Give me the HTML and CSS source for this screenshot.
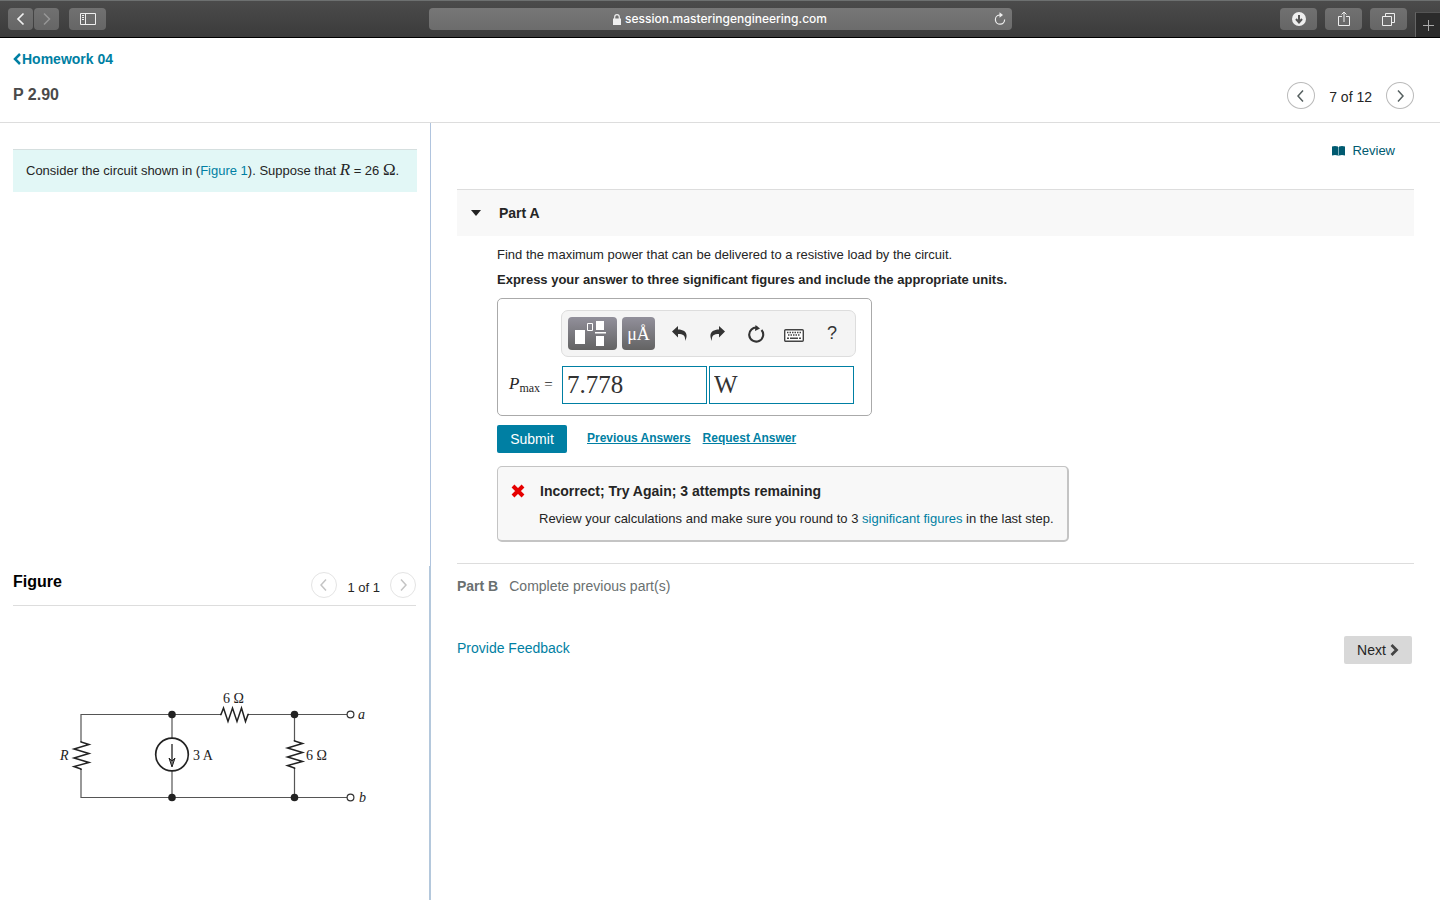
FILE: index.html
```
<!DOCTYPE html>
<html lang="en">
<head>
    <meta charset="UTF-8">
    <meta name="viewport" content="width=device-width, initial-scale=1.0">
    <title>P 2.90 - Homework 04</title>
    <link rel="stylesheet" href="styles.css">
</head>
<body>
    <div class="browser-bar">
        <div class="browser-group">
            <div class="nav-buttons">
                <button class="browser-btn small" aria-label="Back">
                    <svg width="26" height="22" viewBox="0 0 26 22"><path d="M15.500 5.500 10 11l5.500 5.500" fill="none" stroke="#f0f0f0" stroke-width="1.700"/></svg>
                </button>
                <button class="browser-btn small" aria-label="Forward">
                    <svg width="26" height="22" viewBox="0 0 26 22"><path d="M10 5.500 15.500 11 10 16.500" fill="none" stroke="#969696" stroke-width="1.500"/></svg>
                </button>
            </div>
            <button class="browser-btn" aria-label="Sidebar">
                <svg width="16" height="12" viewBox="0 0 16 12" fill="none" stroke="#eee"><path d="M.5.5h15v11H.5zM5.500.5v11M2 2.500h2M2 4.500h2M2 6.500h2"/></svg>
            </button>
        </div>
        <div class="address-bar">
            <svg class="lock" width="8" height="11" viewBox="0 0 8 11"><path d="M0 4.500h8V11H0z" fill="#eee"/><path d="M1.700 5V3a2.300 2.300 0 0 1 4.600 0v2" fill="none" stroke="#eee" stroke-width="1.200"/></svg>
            <span>session.masteringengineering.com</span>
            <button class="reload" aria-label="Reload">
                <svg width="12" height="14" viewBox="0 0 12 14"><path d="M7 3H5.500A4.600 4.600 0 1 0 10.600 7.500" fill="none" stroke="#eee" stroke-width="1.200"/><path d="M5.500.3 9 3 5.500 5.700z" fill="#eee"/></svg>
            </button>
        </div>
        <div class="browser-group right">
            <button class="browser-btn" aria-label="Downloads">
                <svg width="14" height="14" viewBox="0 0 14 14"><circle cx="7" cy="7" r="7" fill="#eee"/><path d="M7 3v7M4 7l3 3.500L10 7" fill="none" stroke="#555" stroke-width="2"/></svg>
            </button>
            <button class="browser-btn" aria-label="Share">
                <svg width="12" height="16" viewBox="0 0 12 16" fill="none" stroke="#eee"><path d="M4 5.500H.5v9h11v-9H8M6 11V1M3.500 3.500 6 1l2.500 2.500"/></svg>
            </button>
            <button class="browser-btn" aria-label="Tabs">
                <svg width="13" height="13" viewBox="0 0 13 13" fill="none" stroke="#eee"><path d="M.5 3.500h9v9h-9zM3.500 3V.5h9v9H10"/></svg>
            </button>
            <button class="new-tab" aria-label="New tab">
                <svg width="11" height="11" viewBox="0 0 11 11"><path d="M5.500 0v11M0 5.500h11" stroke="#aaa"/></svg>
            </button>
        </div>
    </div>

    <header class="page-header">
        <div>
            <a class="back-link" href="#"><svg width="8" height="12" viewBox="0 0 8 12"><path d="M7 1 2 6l5 5" fill="none" stroke="#007fa3" stroke-width="2.500"/></svg><span>Homework 04</span></a>
            <h1>P 2.90</h1>
        </div>
        <div class="pager">
            <button class="circle-btn" aria-label="Previous item">
                <svg width="8" height="12" viewBox="0 0 8 12"><path d="M6 .5 1 6l5 5.500" fill="none" stroke="#555f5f" stroke-width="1.500"/></svg>
            </button>
            <span>7 of 12</span>
            <button class="circle-btn" aria-label="Next item">
                <svg width="8" height="12" viewBox="0 0 8 12"><path d="M2 .5 7 6l-5 5.500" fill="none" stroke="#555f5f" stroke-width="1.500"/></svg>
            </button>
        </div>
    </header>

    <main>
        <div class="left-pane">
            <section class="intro">
                <p class="problem">Consider the circuit shown in (<a href="#figure">Figure 1</a>). Suppose that <i class="math">R</i> = 26 <span class="math">Ω</span>.</p>
            </section>
            <section class="figure" id="figure">
                <div class="figure-header">
                    <h2>Figure</h2>
                    <div class="pager figure-pager">
                        <button class="circle-btn" aria-label="Previous figure" disabled>
                            <svg width="8" height="12" viewBox="0 0 8 12"><path d="M6 .5 1 6l5 5.500" fill="none" stroke="#c4c4c4" stroke-width="1.500"/></svg>
                        </button>
                        <span>1 of 1</span>
                        <button class="circle-btn" aria-label="Next figure" disabled>
                            <svg width="8" height="12" viewBox="0 0 8 12"><path d="M2 .5 7 6l-5 5.500" fill="none" stroke="#c4c4c4" stroke-width="1.500"/></svg>
                        </button>
                    </div>
                </div>
                <svg class="circuit" width="340" height="130" viewBox="0 0 340 130">
                    <!-- wires -->
                    <g fill="none" stroke="#555" stroke-width="1.200">
                        <path d="M180 34.500H41V61M41 89v28.500h266M208 34.500h99M132 35v24M132 90v27M254.500 35v26M254.500 88v29"/>
                    </g>
                    <!-- resistors -->
                    <g fill="none" stroke="#222" stroke-width="1.500">
                        <path d="M41 61v1l8 2.500-15 4.500 15 4.500-15 4.500 15 4.500-15 4 7 2.500v1"/>
                        <path d="M254.500 60v1l8 2.500-15 4.500 15 4.500-15 4.500 15 4.500-15 4 7 2.500v1"/>
                        <path d="M180 34.500h1l2.500-6.500 4.500 13.500 4.500-13.500 4.500 13.500 4.500-13.500 4 13.500 2.500-7h1"/>
                        <circle cx="132" cy="74.500" r="16.300" stroke-width="1.700"/>
                    </g>
                    <path d="M132 64v20" stroke="#222" stroke-width="1.300"/>
                    <path d="m129 78 3 9 3-9-3 3z" fill="#777" stroke="#222"/>
                    <g fill="#222">
                        <circle cx="132" cy="34.500" r="3.800"/>
                        <circle cx="132" cy="117.500" r="3.800"/>
                        <circle cx="254.500" cy="34.500" r="3.800"/>
                        <circle cx="254.500" cy="117.500" r="3.800"/>
                    </g>
                    <g fill="#fff" stroke="#333" stroke-width="1.200">
                        <circle cx="310.500" cy="34.500" r="3.400"/>
                        <circle cx="310.500" cy="117.500" r="3.400"/>
                    </g>
                    <g class="labels">
                        <text x="183" y="23">6 Ω</text>
                        <text x="266" y="80">6 Ω</text>
                        <text x="153" y="80">3 A</text>
                        <text x="20" y="80" font-style="italic">R</text>
                        <text x="318" y="39" font-style="italic">a</text>
                        <text x="319" y="122" font-style="italic">b</text>
                    </g>
                </svg>
            </section>
        </div>

        <div class="right-pane">
            <a class="review" href="#">
                <svg width="13" height="11" viewBox="0 0 13 11"><path d="M0 .5q3-1 6 0v9q-3-1-6 0zM7 .5q3-1 6 0v9q-3-1-6 0z" fill="#005a70"/><path d="M6.500 1v9" stroke="#7fb0bd"/></svg>
                <span>Review</span>
            </a>

            <section class="part-a">
                <div class="part-header">
                    <svg width="10" height="6" viewBox="0 0 10 6"><path d="M0 0h10L5 6z" fill="#222"/></svg>
                    <h2>Part A</h2>
                </div>
                <div class="part-body">
                    <p>Find the maximum power that can be delivered to a resistive load by the circuit.</p>
                    <p class="instructions">Express your answer to three significant figures and include the appropriate units.</p>

                    <div class="answer-box">
                        <div class="math-toolbar">
                            <button class="tool-btn templates" aria-label="Templates">
                                <svg width="37" height="28" viewBox="0 0 37 28"><path d="M1 10h10v14H1zM22 1h8v9h-8zM22 16h8v10h-8zM21 12h11v1.500H21z" fill="#fff"/><path d="M13.500 3.500h5v7h-5z" fill="none" stroke="#fff"/></svg>
                            </button>
                            <button class="tool-btn units">μÅ</button>
                            <div class="plain-tools">
                                <button aria-label="Undo"><svg width="16" height="16" viewBox="0 0 16 16"><path d="M0 5.500 6 0v3.500c7 0 11 4 7 11.500.5-5-1-7-7-7v3.500z" fill="#333"/></svg></button>
                                <button aria-label="Redo"><svg width="16" height="16" viewBox="0 0 16 16"><path d="M15 5.500 9 0v3.500c-7 0-11 4-7 11.500-.5-5 1-7 7-7v3.500z" fill="#333"/></svg></button>
                                <button aria-label="Reset"><svg width="18" height="18" viewBox="0 0 18 18"><path d="M10.500 2.700A7 7 0 1 0 14.500 5" fill="none" stroke="#333" stroke-width="2.100"/><path d="M8.500 0 13 3.500 8 6z" fill="#333"/></svg></button>
                                <button class="keyboard" aria-label="Keyboard"><svg width="20" height="13" viewBox="0 0 20 13"><rect x=".7" y=".7" width="18.600" height="11.600" rx="1" fill="#fff" stroke="#444" stroke-width="1.400"/><path d="M3 3.500h14M4 6h12" stroke="#444" stroke-width="1.500" stroke-dasharray="1.500 1"/><path d="M3 9.200h2M6 9.200h8M15 9.200h2" stroke="#444" stroke-width="1.500"/></svg></button>
                                <button class="help" aria-label="Help">?</button>
                            </div>
                        </div>
                        <div class="answer-row">
                            <label for="value"><i>P</i><sub>max</sub> <span>=</span></label>
                            <input id="value" type="text" value="7.778">
                            <input id="unit" type="text" value="W" aria-label="Units">
                        </div>
                    </div>

                    <div class="actions">
                        <button class="submit">Submit</button>
                        <a href="#">Previous Answers</a>
                        <a href="#">Request Answer</a>
                    </div>

                    <div class="feedback">
                        <svg width="14" height="14" viewBox="0 0 14 14"><path d="m2 2 10 10M12 2 2 12" stroke="#e60000" stroke-width="4"/></svg>
                        <div>
                            <h3>Incorrect; Try Again; 3 attempts remaining</h3>
                            <p>Review your calculations and make sure you round to 3 <a href="#">significant figures</a> in the last step.</p>
                        </div>
                    </div>
                </div>
            </section>

            <section class="part-b">
                <h2>Part B</h2>
                <span>Complete previous part(s)</span>
            </section>

            <footer class="page-footer">
                <a href="#">Provide Feedback</a>
                <button class="next">Next <svg width="9" height="14" viewBox="0 0 9 14"><path d="m1.500 2 5 5-5 5" fill="none" stroke="#444" stroke-width="2.800"/></svg></button>
            </footer>
        </div>
    </main>
</body>
</html>
```

FILE: styles.css
```
* {
    margin: 0;
    padding: 0;
    box-sizing: border-box;
}

body {
    font-family: "Liberation Sans", Arial, sans-serif;
    font-size: 13px;
    line-height: 20px;
    color: #252525;
    background: #fff;
    min-height: 100vh;
    display: flex;
    flex-direction: column;
}

button {
    font-family: inherit;
    border: none;
    background: none;
    cursor: pointer;
}

a {
    color: #007fa3;
    text-decoration: none;
}

svg {
    display: block;
    flex-shrink: 0;
}

/* Browser toolbar */
.browser-bar {
    display: grid;
    grid-template-columns: 1fr 583px 1fr;
    height: 38px;
    padding-left: 8px;
    background: linear-gradient(#4b4b4b, #3b3b3b);
    border-top: 1px solid #6d7070;
    border-bottom: 1px solid #000;
}

.browser-group {
    display: flex;
    gap: 10px;
    padding-top: 7px;
}

.browser-group.right {
    justify-content: flex-end;
    gap: 8px;
}

.nav-buttons {
    display: flex;
    gap: 1px;
}

.browser-btn {
    display: flex;
    align-items: center;
    justify-content: center;
    width: 37px;
    height: 22px;
    border-radius: 4px;
    background: linear-gradient(#717171, #666);
}

.browser-btn.small {
    width: 25px;
}

.address-bar {
    position: relative;
    display: flex;
    align-items: center;
    justify-content: center;
    gap: 4px;
    height: 22px;
    margin: 7px 4px 0 -4px;
    border-radius: 4px;
    background: linear-gradient(#777, #6c6c6c);
    color: #fff;
    font-family: Inter, "Liberation Sans", sans-serif;
    font-size: 12px;
    font-weight: 500;
}

.reload {
    position: absolute;
    right: 6px;
    top: 4px;
}

.new-tab {
    display: flex;
    align-items: center;
    justify-content: center;
    width: 25px;
    height: 25px;
    margin-top: 4px;
    border-top: 1px solid #555;
    border-left: 1px solid #666;
    background: #2b2b2b;
}

/* Assignment header */
.page-header {
    display: flex;
    justify-content: space-between;
    height: 85px;
    padding: 11px 26px 0 13px;
    border-bottom: 1px solid #ddd;
}

.back-link {
    display: flex;
    align-items: center;
    gap: 1px;
    font-size: 14px;
    font-weight: bold;
}

h1 {
    margin-top: 16px;
    font-size: 16px;
    line-height: 20px;
    color: #4a4a4a;
}

.pager {
    display: flex;
    gap: 14px;
    font-size: 14px;
    padding-top: 33px;
}

.pager span {
    padding-top: 5px;
}

.circle-btn {
    display: flex;
    align-items: center;
    justify-content: center;
    width: 28px;
    height: 27px;
    border: 1px solid #bbb;
    border-radius: 50%;
}

.circle-btn:disabled {
    border-color: #e4e4e4;
}

main {
    flex: 1;
    display: flex;
}

/* Left pane */
.left-pane {
    flex: 0 0 431px;
    display: flex;
    flex-direction: column;
}

.intro {
    flex: 1;
    padding: 26px 13px 20px;
    border-right: 1px solid #b0c4de;
}

.problem {
    padding: 11px 13px;
    border-top: 1px solid #d5dfdf;
    background: #e2f7f6;
    white-space: nowrap;
}

.math {
    font-family: "Liberation Serif", "Times New Roman", serif;
    font-size: 17px;
    line-height: 16px;
}

.figure {
    height: 334px;
    padding-left: 13px;
    border-right: 2px solid #b4c8dc;
}

.figure-header {
    display: flex;
    justify-content: space-between;
    height: 40px;
    margin-right: 13px;
    border-bottom: 1px solid #ddd;
}

.figure-header h2 {
    padding-top: 6px;
    font-size: 16px;
    line-height: 20px;
    color: #000;
}

.figure-pager {
    gap: 10px;
    padding-top: 6px;
    font-size: 13px;
}

.figure-pager span {
    padding-top: 6px;
}

.figure-pager .circle-btn {
    width: 26px;
    height: 26px;
}

.circuit {
    margin: 74px 0 0 27px;
}

.labels {
    font-family: "Liberation Serif", "Times New Roman", serif;
    font-size: 14px;
    fill: #222;
}

/* Right pane */
.right-pane {
    flex: 1;
    padding: 18px 26px 0;
}

.review {
    display: flex;
    align-items: center;
    justify-content: flex-end;
    gap: 7px;
    margin-right: 19px;
    color: #005a70;
}

.part-header {
    display: flex;
    align-items: center;
    gap: 18px;
    height: 47px;
    margin-top: 28px;
    padding-left: 14px;
    border-top: 1px solid #ddd;
    background: #f8f8f8;
}

.part-header h2 {
    font-size: 14px;
}

.part-body {
    padding: 9px 0 0 40px;
}

.instructions {
    margin-top: 5px;
    font-weight: bold;
}

.answer-box {
    width: 375px;
    height: 118px;
    margin-top: 8px;
    padding: 11px;
    border: 1px solid #aaa;
    border-radius: 5px;
}

.math-toolbar {
    display: flex;
    align-items: center;
    gap: 5px;
    width: 295px;
    height: 47px;
    margin-left: 52px;
    padding: 0 4px 0 6px;
    border: 1px solid #ddd;
    border-radius: 7px;
    background: #f4f4f4;
}

.tool-btn {
    display: flex;
    align-items: center;
    justify-content: center;
    width: 33px;
    height: 33px;
    border-radius: 4px;
    background: linear-gradient(#92909b, #636363);
    color: #fff;
}

.templates {
    width: 49px;
}

.units {
    padding-top: 2px;
    font-family: "Liberation Serif", "Times New Roman", serif;
    font-size: 18px;
}

.plain-tools {
    flex: 1;
    display: flex;
    padding-left: 1px;
}

.plain-tools button {
    flex: 1;
    display: flex;
    align-items: center;
    justify-content: center;
    height: 33px;
}

.plain-tools .keyboard {
    padding-top: 3px;
}

.plain-tools .help {
    font-size: 18px;
    color: #333;
}

.answer-row {
    display: flex;
    gap: 2px;
    margin-top: 9px;
}

.answer-row label {
    width: 51px;
    padding-top: 8px;
    font-family: "Liberation Serif", "Times New Roman", serif;
    font-size: 17px;
    white-space: nowrap;
}

.answer-row sub {
    font-size: 12px;
    line-height: 12px;
    vertical-align: -3px;
}

.answer-row span {
    font-size: 15px;
}

.answer-row input {
    width: 145px;
    height: 38px;
    padding: 0 4px;
    border: 1px solid #007fa3;
    font-family: "Liberation Serif", "Times New Roman", serif;
    font-size: 25px;
    color: #333;
}

.actions {
    display: flex;
    align-items: center;
    gap: 12px;
    margin-top: 9px;
}

.actions a {
    margin-bottom: 2px;
    font-size: 12px;
    font-weight: bold;
    text-decoration: underline;
}

.submit {
    width: 70px;
    height: 28px;
    margin-right: 8px;
    border-radius: 2px;
    background: #007fa3;
    color: #fff;
    font-size: 14px;
}

.feedback {
    display: flex;
    gap: 14px;
    width: 572px;
    height: 76px;
    margin-top: 13px;
    padding: 14px 13px;
    border: 1px solid #c4c4c4;
    border-right-width: 2px;
    border-bottom-width: 2px;
    border-radius: 5px;
    background: #f8f8f8;
    white-space: nowrap;
}

.feedback svg {
    margin-top: 3px;
}

.feedback h3 {
    padding-left: 1px;
    font-size: 14px;
    line-height: 20px;
}

.feedback p {
    margin-top: 8px;
}

.part-b {
    display: flex;
    gap: 11px;
    margin-top: 21px;
    padding-top: 12px;
    border-top: 1px solid #ddd;
    font-size: 14px;
    color: #6a7070;
}

.part-b h2 {
    font-size: 14px;
}

.page-footer {
    display: flex;
    justify-content: space-between;
    margin-top: 40px;
    font-size: 14px;
}

.page-footer a {
    padding-top: 2px;
}

.next {
    display: flex;
    align-items: center;
    justify-content: center;
    gap: 4px;
    width: 68px;
    height: 28px;
    margin-right: 2px;
    border-radius: 2px;
    background: #d8d8d8;
    color: #252525;
    font-size: 14px;
}
```
